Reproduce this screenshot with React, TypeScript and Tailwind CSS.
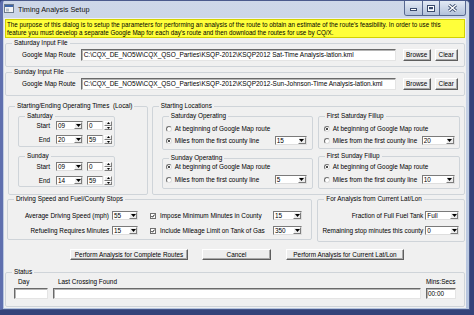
import type { ReactNode } from "react";

const SAT_PATH =
  "C:\\CQX_DE_NO5W\\CQX_QSO_Parties\\KSQP-2012\\KSQP2012 Sat-Time Analysis-latlon.kml";
const SUN_PATH =
  "C:\\CQX_DE_NO5W\\CQX_QSO_Parties\\KSQP-2012\\KSQP2012-Sun-Johnson-Time Analysis-latlon.kml";

const Group = ({
  title,
  className,
  children,
}: {
  title: string;
  className: string;
  children?: ReactNode;
}) => (
  <fieldset className={`rounded-[2px] border border-[#cfd4d9] ${className}`}>
    <legend className="ml-[6px] px-[2px] leading-[8px]">{title}</legend>
    {children}
  </fieldset>
);

const Arrow = () => (
  <svg width="5" height="3" viewBox="0 0 5 3">
    <path d="M0 0h5L2.5 3z" fill="#000" />
  </svg>
);

const Combo = ({ v, className }: { v: string; className: string }) => (
  <div
    className={`flex h-[9px] border border-t-[#7a7a7a] border-l-[#7a7a7a] border-r-[#dedede] border-b-[#dedede] bg-white ${className}`}
  >
    <span className="flex-1 pl-[1px] leading-[7px]">{v}</span>
    <span className="flex w-[8px] items-center justify-center border border-t-white border-l-white border-r-[#7d7d7d] border-b-[#7d7d7d] bg-[#ececec]">
      <Arrow />
    </span>
  </div>
);

const Spin = ({ v }: { v: string }) => (
  <div className="ml-[4px] flex h-[9px]">
    <div className="w-[16px] border border-t-[#7a7a7a] border-l-[#7a7a7a] border-r-[#dedede] border-b-[#dedede] bg-white pl-[1px] leading-[7px]">
      {v}
    </div>
    <div className="ml-[1px] flex w-[8px] flex-col">
      <span className="flex h-1/2 items-center justify-center border border-t-white border-l-white border-r-[#7d7d7d] border-b-[#7d7d7d] bg-[#ececec]">
        <svg width="3" height="2" viewBox="0 0 3 2">
          <path d="M0 2h3L1.5 0z" fill="#000" />
        </svg>
      </span>
      <span className="flex h-1/2 items-center justify-center border border-t-white border-l-white border-r-[#7d7d7d] border-b-[#7d7d7d] bg-[#ececec]">
        <svg width="3" height="2" viewBox="0 0 3 2">
          <path d="M0 0h3L1.5 2z" fill="#000" />
        </svg>
      </span>
    </div>
  </div>
);

const Radio = ({ on }: { on?: boolean }) => (
  <span className="flex h-[6px] w-[6px] shrink-0 items-center justify-center rounded-full border border-t-[#6f6f6f] border-l-[#6f6f6f] border-r-[#dcdcdc] border-b-[#dcdcdc] bg-white">
    {on && <span className="h-[2px] w-[2px] rounded-full bg-[#111]" />}
  </span>
);

const Check = () => (
  <span className="flex h-[6px] w-[6px] shrink-0 items-center justify-center border border-[#707070] bg-white">
    <svg width="4" height="4" viewBox="0 0 4 4">
      <path d="M0.4 2l1.1 1.2L3.6 0.6" stroke="#000" strokeWidth="0.9" fill="none" />
    </svg>
  </span>
);

const Btn = ({ children, className }: { children: ReactNode; className: string }) => (
  <div
    className={`flex items-center justify-center border border-t-white border-l-white border-r-[#5e5e5e] border-b-[#5e5e5e] bg-[#eeeeee] shadow-[inset_-1px_-1px_0_#a8a8a8] ${className}`}
  >
    {children}
  </div>
);

const Box = ({ children, className }: { children?: ReactNode; className: string }) => (
  <div
    className={`border border-t-[#6a6a6a] border-l-[#6a6a6a] border-r-[#e4e4e4] border-b-[#e4e4e4] bg-white shadow-[inset_1px_1px_0_#b5b5b5] ${className}`}
  >
    {children}
  </div>
);

const OpRow = ({ label, on, combo, w }: { label: string; on?: boolean; combo?: string; w: string }) => (
  <div className="flex h-[9px] items-center">
    <Radio on={on} />
    <span className="ml-[3px] whitespace-nowrap">{label}</span>
    {combo && <Combo v={combo} className={`ml-auto ${w}`} />}
  </div>
);

const TimeRow = ({ label, h, m }: { label: string; h: string; m: string }) => (
  <div className="flex h-[9px] items-center">
    <span className="w-[31px] text-right">{label}</span>
    <Combo v={h} className="ml-[6px] w-[27px]" />
    <Spin v={m} />
  </div>
);

const FileRow = ({ path }: { path: string }) => (
  <div className="flex items-center pt-[2px] pl-[16px]">
    <span className="whitespace-nowrap">Google Map Route</span>
    <Box className="ml-[5px] h-[12px] w-[315px] overflow-hidden pl-[2px] text-[6.5px] leading-[10px] whitespace-nowrap">
      {path}
    </Box>
    <Btn className="ml-[7px] h-[12px] w-[28px]">Browse</Btn>
    <Btn className="ml-[4px] h-[12px] w-[23px]">Clear</Btn>
  </div>
);

export default function App() {
  return (
    <div className="h-[315px] w-[474px] overflow-hidden bg-[#34437a] font-['Liberation_Sans',Arial,sans-serif] text-[6.4px] text-black">
      <div className="h-[310px] w-[470px] rounded-t-[4px] border border-l-[3px] border-[#4a5a8c] border-l-[#5f6fae] bg-linear-to-b from-[#cdd7e8] to-[#b5c4de]">
        {/* title bar */}
        <div className="flex h-[17px] items-start">
          <svg className="mt-[3px] ml-[1px]" width="10" height="9" viewBox="0 0 10 9">
            <rect x="0.5" y="0.5" width="9" height="8" fill="#f4f4f4" stroke="#6c7a8c" />
            <rect x="1" y="1" width="8" height="2" fill="#3c64a8" />
            <rect x="2" y="4.5" width="3" height="3" fill="#b8c0cc" />
          </svg>
          <span className="mt-[5px] ml-[4px] text-[7.3px] leading-[8px] text-[#111]">
            Timing Analysis Setup
          </span>
          <div className="mr-[3px] ml-auto flex h-[15px] overflow-hidden rounded-b-[3px] border border-t-0 border-[#56678f]">
            <span className="flex w-[18px] items-end justify-center border-r border-[#56678f] bg-linear-to-b from-[#e3eaf5] to-[#b3c2da] pb-[4px]">
              <span className="h-[3px] w-[7px] border border-[#394a6c] bg-white" />
            </span>
            <span className="flex w-[17px] items-center justify-center border-r border-[#56678f] bg-linear-to-b from-[#e3eaf5] to-[#b3c2da]">
              <span className="h-[7px] w-[8px] border border-[#394a6c] bg-white p-[1px]">
                <span className="block h-full w-full border-t-[2px] border-[#394a6c] bg-[#c9d4e6]" />
              </span>
            </span>
            <span className="flex w-[25px] items-center justify-center bg-linear-to-b from-[#e3eaf5] to-[#b3c2da]">
              <svg width="9" height="8" viewBox="0 0 9 8">
                <path d="M1 1l7 6M8 1L1 7" stroke="#394a6c" strokeWidth="3" />
                <path d="M1 1l7 6M8 1L1 7" stroke="#fff" strokeWidth="1.4" />
              </svg>
            </span>
          </div>
        </div>

        {/* client */}
        <div className="mr-[3px] ml-[1px] flex h-[290px] flex-col bg-[#f0f0f0] px-[1px]">
          <div className="mt-[1px] h-[19px] w-[460px] border border-[#d2d200] bg-[#ffff3a] px-[1px] pt-[1px] text-[6.28px] leading-[8px] whitespace-nowrap">
            The purpose of this dialog is to setup the parameters for performing an analysis of the route to obtain an
            estimate of the route's feasibility. In order to use this
            <br />
            feature you must develop a separate Google Map for each day's route and then download the routes for use by
            CQ/X.
          </div>

          <Group title="Saturday Input File" className="mt-[1px] h-[28px]">
            <FileRow path={SAT_PATH} />
          </Group>

          <Group title="Sunday Input File" className="mt-[1px] h-[28px]">
            <FileRow path={SUN_PATH} />
          </Group>

          <div className="mt-[6px] flex h-[93px]">
            <Group title="Starting/Ending Operating Times  (Local)" className="ml-[3px] h-full w-[140px] whitespace-pre">
              <Group title="Saturday" className="mt-[2px] ml-[9px] h-[35px] w-[97px]">
                <div className="flex flex-col gap-[5px] pt-[1px]">
                  <TimeRow label="Start" h="09" m="0" />
                  <TimeRow label="End" h="20" m="59" />
                </div>
              </Group>
              <Group title="Sunday" className="mt-[5px] ml-[9px] h-[35px] w-[97px]">
                <div className="flex flex-col gap-[5px] pt-[2px]">
                  <TimeRow label="Start" h="09" m="0" />
                  <TimeRow label="End" h="14" m="59" />
                </div>
              </Group>
            </Group>

            <Group title="Starting Locations" className="ml-[4px] h-full w-[314px]">
              <div className="mt-[2px] flex items-start">
                <Group title="Saturday Operating" className="ml-[9px] h-[38px] w-[151px]">
                  <div className="flex flex-col gap-[3px] pt-[4px] pr-[5px] pl-[3px]">
                    <OpRow label="At beginning of Google Map route" w="" />
                    <OpRow label="Miles from the first county line" on combo="15" w="w-[32px]" />
                  </div>
                </Group>
                <Group title="First Saturday Fillup" className="ml-[5px] h-[37px] w-[142px]">
                  <div className="flex flex-col gap-[3px] pt-[4px] pr-[4px] pl-[5px]">
                    <OpRow label="At beginning of Google Map route" on w="" />
                    <OpRow label="Miles from the first county line" combo="20" w="w-[33px]" />
                  </div>
                </Group>
              </div>
              <div className="flex items-start">
                <Group title="Sunday Operating" className="mt-[4px] ml-[9px] h-[35px] w-[151px]">
                  <div className="flex flex-col gap-[4px] pr-[5px] pl-[3px]">
                    <OpRow label="At beginning of Google Map route" on w="" />
                    <OpRow label="Miles from the first county line" combo="5" w="w-[32px]" />
                  </div>
                </Group>
                <Group title="First Sunday Fillup" className="mt-[2px] ml-[5px] h-[37px] w-[142px]">
                  <div className="flex flex-col gap-[4px] pt-[2px] pr-[4px] pl-[5px]">
                    <OpRow label="At beginning of Google Map route" on w="" />
                    <OpRow label="Miles from the first county line" combo="10" w="w-[33px]" />
                  </div>
                </Group>
              </div>
            </Group>
          </div>

          <div className="flex items-start">
            <Group title="Driving Speed and Fuel/County Stops" className="ml-[2px] h-[45px] w-[306px]">
              <div className="flex flex-col gap-[6px] pt-[8px]">
                <div className="flex h-[9px] items-center">
                  <span className="w-[101px] text-right whitespace-nowrap">Average Driving Speed (mph)</span>
                  <Combo v="55" className="ml-[3px] w-[26px]" />
                  <span className="ml-[12px]">
                    <Check />
                  </span>
                  <span className="ml-[4px] w-[109px] whitespace-nowrap">Impose Minimum Minutes in County</span>
                  <Combo v="15" className="ml-[4px] w-[29px]" />
                </div>
                <div className="flex h-[9px] items-center">
                  <span className="w-[101px] text-right whitespace-nowrap">Refueling Requires Minutes</span>
                  <Combo v="15" className="ml-[3px] w-[26px]" />
                  <span className="ml-[12px]">
                    <Check />
                  </span>
                  <span className="ml-[4px] w-[109px] whitespace-nowrap">Include Mileage Limit on Tank of Gas</span>
                  <Combo v="350" className="ml-[4px] w-[29px]" />
                </div>
              </div>
            </Group>
            <Group title="For Analysis from Current Lat/Lon" className="ml-[5px] h-[47px] w-[148px]">
              <div className="flex flex-col gap-[6px] pt-[8px]">
                <div className="flex h-[9px] items-center">
                  <span className="w-[105px] text-right whitespace-nowrap">Fraction of Full Fuel Tank</span>
                  <Combo v="Full" className="ml-[2px] w-[34px]" />
                </div>
                <div className="flex h-[9px] items-center">
                  <span className="w-[105px] text-right whitespace-nowrap">Remaining stop minutes this county</span>
                  <Combo v="0" className="ml-[2px] w-[34px]" />
                </div>
              </div>
            </Group>
          </div>

          <div className="mt-[7px] flex">
            <Btn className="ml-[65px] h-[11px] w-[118px]">Perform Analysis for Complete Routes</Btn>
            <Btn className="ml-[14px] h-[11px] w-[69px]">Cancel</Btn>
            <Btn className="ml-[15px] h-[11px] w-[118px]">Perform Analysis for Current Lat/Lon</Btn>
          </div>

          <Group title="Status" className="mt-[8px] h-[39px]">
            <div className="flex pt-[2px]">
              <div className="ml-[8px] w-[34px]">
                <div className="pl-[4px] leading-[7px]">Day</div>
                <Box className="mt-[3px] h-[11px]" />
              </div>
              <div className="ml-[5px] w-[368px]">
                <div className="pl-[5px] leading-[7px]">Last Crossing Found</div>
                <Box className="mt-[3px] h-[11px]" />
              </div>
              <div className="ml-[5px] w-[30px]">
                <div className="leading-[7px]">Mins:Secs</div>
                <Box className="mt-[3px] h-[11px] pl-[1px] leading-[9px]">00:00</Box>
              </div>
            </div>
          </Group>
        </div>
      </div>
    </div>
  );
}
